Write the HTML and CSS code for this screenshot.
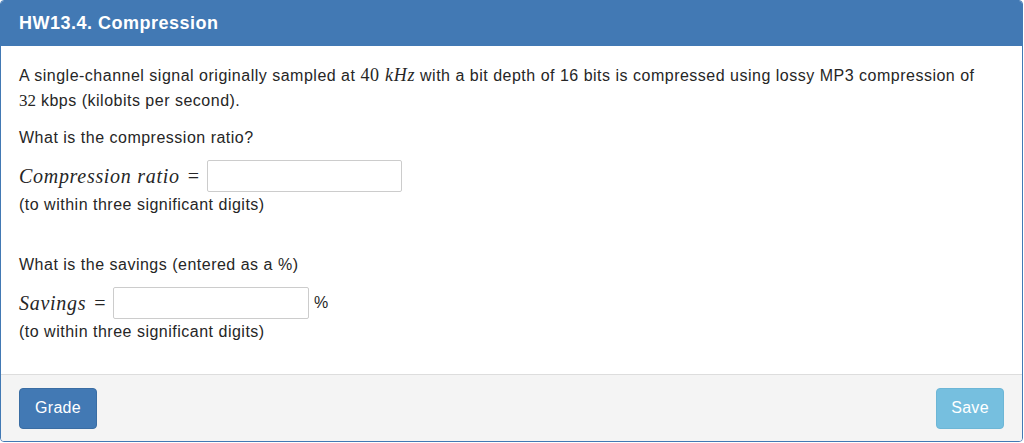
FILE: index.html
```html
<!DOCTYPE html>
<html lang="en">
<head>
<meta charset="UTF-8" />
<title>HW13.4. Compression</title>
<link rel="stylesheet" href="styles.css">
</head>
<body>
<div class="panel">
  <!-- Heading -->
  <div class="panel-heading">
    <h3 class="panel-title">HW13.4. Compression</h3>
  </div>

  <!-- Question -->
  <div class="panel-body">
    <p class="intro">A single-channel signal originally sampled at <span class="math inline"><span class="up">40</span> kHz</span> with a bit depth of 16 bits is compressed using lossy MP3 compression of <span class="up num">32</span> kbps (kilobits per second).</p>
    <p class="ask">What is the compression ratio?</p>
    <div class="answer">
      <span class="math">Compression ratio<span class="up eq">=</span></span>
      <input type="text" class="field field-ratio" />
    </div>
    <p class="hint">(to within three significant digits)</p>

    <p class="ask ask-gap">What is the savings (entered as a %)</p>
    <div class="answer">
      <span class="math">Savings<span class="up eq">=</span></span>
      <input type="text" class="field field-savings" />
      <span class="unit">%</span>
    </div>
    <p class="hint">(to within three significant digits)</p>
  </div>

  <!-- Footer -->
  <div class="panel-footer">
    <button class="btn btn-primary">Grade</button>
    <button class="btn btn-info" disabled>Save</button>
  </div>
</div>
</body>
</html>
```

FILE: styles.css
```css
* {
  box-sizing: border-box;
  margin: 0;
  padding: 0;
}
body {
  background: #fff;
  font-family: "Liberation Sans", Arial, sans-serif;
  font-size: 16px;
  letter-spacing: 0.5px;
  color: #262626;
}
.panel {
  width: 1023px;
  height: 442px;
  border: 1px solid #4279b4;
  border-radius: 4px;
  overflow: hidden;
  display: flex;
  flex-direction: column;
}
.panel-heading {
  background: #4279b4;
  color: #fff;
  height: 45px;
  padding: 0 18px;
  display: flex;
  align-items: center;
}
.panel-title {
  font-size: 18px;
  font-weight: bold;
  letter-spacing: 0.5px;
}
.panel-body {
  flex: 1;
  padding: 17px 18px 0;
}
p {
  line-height: 25px;
}
.intro {
  max-width: 975px;
  margin-bottom: 12px;
}
.math {
  font-family: "Liberation Serif", "Times New Roman", serif;
  font-style: italic;
  font-size: 20px;
  letter-spacing: 0.7px;
}
.math.inline {
  font-size: 18px;
  line-height: 1;
}
.up {
  font-style: normal;
}
.eq {
  margin-left: 8px;
}
.num {
  font-family: "Liberation Serif", "Times New Roman", serif;
  font-size: 17px;
  letter-spacing: 0;
}
.answer {
  margin-top: 10px;
  display: flex;
  align-items: center;
  height: 32px;
}
.answer .math {
  margin-right: 7px;
}
.field {
  height: 32px;
  border: 1px solid #ccc;
  border-radius: 2px;
  background: #fff;
}
.field-ratio {
  width: 195px;
}
.field-savings {
  width: 196px;
}
.unit {
  margin-left: 5px;
}
.ask-gap {
  margin-top: 35px;
}
.panel-footer {
  background: #f4f4f4;
  border-top: 1px solid #ddd;
  height: 67px;
  padding: 0 18px;
  display: flex;
  align-items: center;
  justify-content: space-between;
}
.btn {
  height: 41px;
  border-radius: 4px;
  font-family: "Liberation Sans", Arial, sans-serif;
  font-size: 16px;
  letter-spacing: 0.3px;
  color: #fff;
  padding: 0;
  border: 1px solid transparent;
}
.btn-primary {
  background: #4279b4;
  border-color: #3a6da3;
  width: 78px;
}
.btn-info {
  background: #76bfdf;
  border-color: #6db6d6;
  width: 68px;
}
```
